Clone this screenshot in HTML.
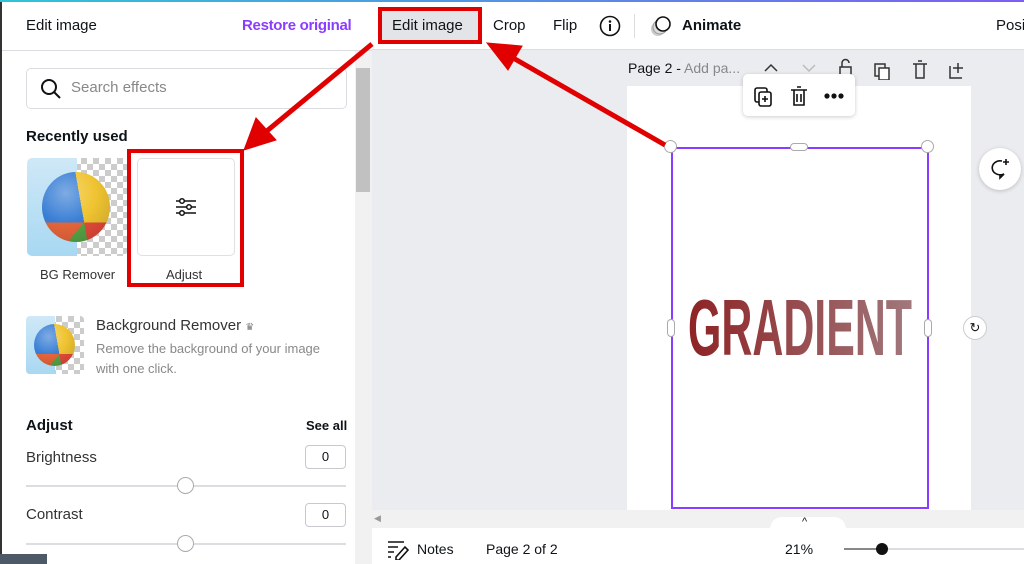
<!DOCTYPE html>
<html><head><style>
*{box-sizing:border-box;margin:0;padding:0}
body{width:1024px;height:564px;overflow:hidden;font-family:"Liberation Sans",sans-serif;background:#ebecf0;position:relative;color:#0e1318}
.a{position:absolute}
.chk{background-color:#fff;background-image:linear-gradient(45deg,#ccc 25%,transparent 25%,transparent 75%,#ccc 75%),linear-gradient(45deg,#ccc 25%,transparent 25%,transparent 75%,#ccc 75%);background-size:12px 12px;background-position:0 0,6px 6px}
.ball{border-radius:50%;background:radial-gradient(circle at 35% 30%,rgba(255,255,255,.35),rgba(0,0,0,0) 45%,rgba(0,0,0,.2) 100%),conic-gradient(from 20deg at 62% 72%,#f0c431 0 70deg,#e64a3a 70deg 150deg,#56a546 150deg 200deg,#e6653a 200deg 250deg,#3a7fd5 250deg 330deg,#f0c431 330deg)}
.inp{border:1px solid #c7c9cf;border-radius:4px;background:#fff;font-size:13px;text-align:center;line-height:22px}
.track{height:2px;background:#dcdde1}
.knob{width:17px;height:17px;border-radius:50%;border:1px solid #aaa;background:#fff}
</style></head><body>
<div class="a" style="left:0;top:0;width:1024px;height:2px;background:linear-gradient(90deg,#2ec4d6,#7d5ef2)"></div>
<div class="a" style="left:0;top:2px;width:372px;height:562px;background:#fff;border-left:2px solid #333"></div>
<div class="a" style="left:26px;top:17px;font-size:15px">Edit image</div>
<div class="a" style="left:242px;top:17px;font-size:15px;color:#8b3dff;font-weight:bold;letter-spacing:-0.3px">Restore original</div>
<div class="a" style="left:2px;top:50px;width:370px;height:1px;background:#dcdde1"></div>
<div class="a" style="left:355px;top:51px;width:17px;height:513px;background:#f1f1f1"></div>
<div class="a" style="left:356px;top:68px;width:14px;height:124px;background:#c1c1c1"></div>
<div class="a" style="left:26px;top:68px;width:321px;height:41px;border:1px solid #dcdde1;border-radius:5px"></div>
<svg class="a" style="left:40px;top:78px" width="22" height="22"><circle cx="9" cy="9" r="7" fill="none" stroke="#111" stroke-width="2"/><line x1="14" y1="14" x2="20" y2="20" stroke="#111" stroke-width="2"/></svg>
<div class="a" style="left:71px;top:79px;font-size:15px;color:#888">Search effects</div>
<div class="a" style="left:26px;top:128px;font-size:15px;font-weight:bold">Recently used</div>
<div class="a chk" style="left:27px;top:158px;width:100px;height:98px;border-radius:5px;overflow:hidden"><div style="position:absolute;left:0;top:0;width:50px;height:98px;background:linear-gradient(#cfe8f7,#a8d8f2)"></div><div class="ball a" style="left:15px;top:14px;width:68px;height:70px"></div></div>
<div class="a" style="left:40px;top:267px;font-size:13px;color:#333">BG Remover</div>
<div class="a" style="left:137px;top:158px;width:98px;height:98px;border:1px solid #e0e0e0;border-radius:5px"></div>
<svg class="a" style="left:175px;top:196px" width="22" height="22"><g stroke="#111" stroke-width="1.5" fill="#fff"><line x1="1" y1="5" x2="21" y2="5"/><line x1="1" y1="11" x2="21" y2="11"/><line x1="1" y1="17" x2="21" y2="17"/><circle cx="7" cy="5" r="2.3"/><circle cx="14" cy="11" r="2.3"/><circle cx="7" cy="17" r="2.3"/></g></svg>
<div class="a" style="left:166px;top:267px;font-size:13px;color:#333">Adjust</div>
<div class="a" style="left:127px;top:149px;width:117px;height:138px;border:4px solid #e00000"></div>
<div class="a chk" style="left:26px;top:316px;width:58px;height:58px;border-radius:4px;overflow:hidden"><div style="position:absolute;left:0;top:0;width:29px;height:58px;background:linear-gradient(#cfe8f7,#a8d8f2)"></div><div class="ball a" style="left:8px;top:8px;width:41px;height:42px"></div></div>
<div class="a" style="left:96px;top:317px;font-size:15px;color:#333">Background Remover <span style="font-size:10px;color:#777">&#9819;</span></div>
<div class="a" style="left:96px;top:339px;font-size:13px;color:#888;line-height:20px;width:250px">Remove the background of your image with one click.</div>
<div class="a" style="left:26px;top:417px;font-size:15px;font-weight:bold">Adjust</div>
<div class="a" style="left:306px;top:418px;font-size:13px;font-weight:bold">See all</div>
<div class="a" style="left:26px;top:449px;font-size:15px;color:#333">Brightness</div>
<div class="a inp" style="left:305px;top:445px;width:41px;height:24px">0</div>
<div class="a track" style="left:26px;top:485px;width:320px"></div>
<div class="a knob" style="left:177px;top:477px"></div>
<div class="a" style="left:26px;top:506px;font-size:15px;color:#333">Contrast</div>
<div class="a inp" style="left:305px;top:503px;width:41px;height:24px">0</div>
<div class="a track" style="left:26px;top:543px;width:320px"></div>
<div class="a knob" style="left:177px;top:535px"></div>
<div class="a" style="left:0;top:554px;width:47px;height:10px;background:#4d5966"></div>
<div class="a" style="left:372px;top:2px;width:652px;height:48px;background:#fff;border-bottom:1px solid #dcdde1"></div>
<div class="a" style="left:378px;top:7px;width:104px;height:37px;background:#e3e4e8;border:4px solid #e00000"></div>
<div class="a" style="left:392px;top:17px;font-size:15px">Edit image</div>
<div class="a" style="left:493px;top:17px;font-size:15px">Crop</div>
<div class="a" style="left:553px;top:17px;font-size:15px">Flip</div>
<svg class="a" style="left:599px;top:15px" width="22" height="22"><circle cx="11" cy="11" r="9.5" fill="none" stroke="#111" stroke-width="1.6"/><circle cx="11" cy="6.5" r="1.3" fill="#111"/><rect x="10" y="9" width="2" height="7" fill="#111"/></svg>
<div class="a" style="left:634px;top:14px;width:1px;height:24px;background:#ddd"></div>
<svg class="a" style="left:649px;top:14px" width="24" height="24"><circle cx="9" cy="15" r="7" fill="#ccc"/><circle cx="11" cy="13" r="7" fill="#ddd" stroke="#999"/><circle cx="14" cy="10" r="7" fill="#fff" stroke="#111" stroke-width="1.6"/></svg>
<div class="a" style="left:682px;top:17px;font-size:15px;font-weight:bold">Animate</div>
<div class="a" style="left:996px;top:17px;font-size:15px">Posi</div>
<div class="a" style="left:628px;top:60px;font-size:14px">Page 2 - <span style="color:#888">Add pa...</span></div>
<svg class="a" style="left:760px;top:58px;" width="210" height="22" fill="none" stroke="#333" stroke-width="1.5"><path d="M5 13l6-6 6 6"/><path d="M43 7l6 6 6-6" stroke="#bbb"/><rect x="80" y="9" width="11" height="11"/><path d="M82 9V5a3.5 3.5 0 0 1 7 0"/><rect x="115" y="6" width="10" height="12"/><rect x="119" y="10" width="10" height="12" fill="#fff"/><path d="M153 6h14M156 6v14h8V6M158 3h4"/><path d="M198 5v10M193 10h10M190 8v12h12"/></svg>
<div class="a" style="left:627px;top:86px;width:344px;height:430px;background:#fff"></div>
<div class="a" style="left:743px;top:74px;width:112px;height:42px;background:#fff;border-radius:5px;box-shadow:0 1px 4px rgba(0,0,0,.2)"></div>
<svg class="a" style="left:753px;top:84px" width="95" height="24" fill="none" stroke="#111" stroke-width="1.6"><rect x="2" y="4" width="12" height="14" rx="2"/><rect x="6" y="8" width="12" height="14" rx="2" fill="#fff"/><path d="M12 12v6M9 15h6"/><path d="M38 6h16M41 6v15h10V6M44 3h4M44 10v8M48 10v8"/><circle cx="74" cy="12" r="1.8" fill="#111"/><circle cx="81" cy="12" r="1.8" fill="#111"/><circle cx="88" cy="12" r="1.8" fill="#111"/></svg>
<div class="a" style="left:671px;top:147px;width:258px;height:362px;border:2px solid #8b3dff"></div>
<div class="a" style="left:664px;top:140px;width:13px;height:13px;border-radius:50%;background:#fff;border:1px solid #aaa"></div>
<div class="a" style="left:921px;top:140px;width:13px;height:13px;border-radius:50%;background:#fff;border:1px solid #aaa"></div>
<div class="a" style="left:790px;top:143px;width:18px;height:8px;border-radius:4px;background:#fff;border:1px solid #aaa"></div>
<div class="a" style="left:667px;top:319px;width:8px;height:18px;border-radius:4px;background:#fff;border:1px solid #aaa"></div>
<div class="a" style="left:924px;top:319px;width:8px;height:18px;border-radius:4px;background:#fff;border:1px solid #aaa"></div>
<svg class="a" style="left:686px;top:292px" width="230" height="70"><defs><linearGradient id="g" x1="0" x2="1"><stop offset="0" stop-color="#8e2325"/><stop offset="1" stop-color="#a0787c"/></linearGradient></defs><text x="2" y="63" textLength="224" lengthAdjust="spacingAndGlyphs" font-family="Liberation Sans Narrow, Liberation Sans, sans-serif" font-weight="bold" font-size="80" fill="url(#g)">GRADIENT</text></svg>
<div class="a" style="left:979px;top:148px;width:42px;height:42px;border-radius:50%;background:#fff;box-shadow:0 1px 4px rgba(0,0,0,.2)"></div>
<svg class="a" style="left:989px;top:157px" width="24" height="24" fill="none" stroke="#111" stroke-width="1.6"><path d="M13 4a8 7 0 1 0 2 13l-4 4v-4"/><path d="M17 2v6M14 5h6"/></svg>
<div class="a" style="left:963px;top:316px;width:24px;height:24px;border-radius:50%;background:#fff;border:1px solid #ccc;font-size:13px;text-align:center;line-height:22px">&#x21bb;</div>
<div class="a" style="left:372px;top:510px;width:652px;height:18px;background:#f1f1f1"></div>
<div class="a" style="left:374px;top:513px;font-size:9px;color:#999">&#9664;</div>
<div class="a" style="left:770px;top:517px;width:76px;height:14px;background:#fff;border-radius:12px 12px 0 0"></div>
<div class="a" style="left:802px;top:516px;font-size:11px">^</div>
<div class="a" style="left:372px;top:528px;width:652px;height:36px;background:#fff"></div>
<svg class="a" style="left:386px;top:538px" width="24" height="22" fill="none" stroke="#111" stroke-width="1.6"><path d="M2 4h16M2 9h10M2 14h6M2 19h3M10 19l9-10 3 3-9 10h-3z"/></svg>
<div class="a" style="left:417px;top:541px;font-size:14px">Notes</div>
<div class="a" style="left:486px;top:541px;font-size:14px">Page 2 of 2</div>
<div class="a" style="left:785px;top:541px;font-size:14px">21%</div>
<div class="a" style="left:844px;top:548px;width:180px;height:2px;background:#dcdde1"></div>
<div class="a" style="left:844px;top:548px;width:38px;height:2px;background:#888"></div>
<div class="a" style="left:876px;top:543px;width:12px;height:12px;border-radius:50%;background:#111"></div>
<svg class="a" style="left:0;top:0" width="1024" height="564"><g fill="#e00000" stroke="#e00000"><line x1="372" y1="44" x2="262" y2="135" stroke-width="5"/><polygon points="244,150 256,118 276,140"/><line x1="665" y1="145" x2="508" y2="55" stroke-width="5"/><polygon points="487,43 522,46 508,70"/></g></svg>
</body></html>
